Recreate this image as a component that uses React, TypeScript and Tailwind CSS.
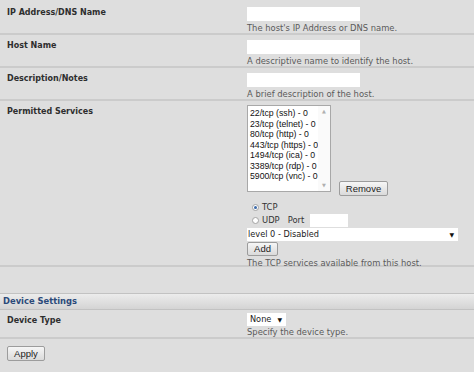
import React from "react";

const services = [
  "22/tcp (ssh) - 0",
  "23/tcp (telnet) - 0",
  "80/tcp (http) - 0",
  "443/tcp (https) - 0",
  "1494/tcp (ica) - 0",
  "3389/tcp (rdp) - 0",
  "5900/tcp (vnc) - 0",
];

const verdana = "font-['DejaVu_Sans',Verdana,sans-serif]";
const arial = "font-['Liberation_Sans',Arial,sans-serif]";

function Help({ children }: { children: React.ReactNode }) {
  return <p className="h-[10px] whitespace-nowrap text-[8.4px] leading-[10px] text-[#5a5a5a]">{children}</p>;
}

function Label({ children }: { children: React.ReactNode }) {
  return (
    <div className="w-[247px] shrink-0 pl-[7px] pt-[6px] text-[8px] font-bold leading-[10px] text-[#2e2e2e]">
      {children}
    </div>
  );
}

function TextRow({ label, help, first = false }: { label: string; help: string; first?: boolean }) {
  return (
    <div className={`flex border-b-2 border-[#cbcbcb] ${first ? "h-[35px] pt-[2px]" : "h-[33px]"}`}>
      <Label>{label}</Label>
      <div className="pt-[5px]">
        <div className="h-[14px] w-[113px] bg-white" />
        <div className="mt-[2px]">
          <Help>{help}</Help>
        </div>
      </div>
    </div>
  );
}

function Button({ children, className = "" }: { children: React.ReactNode; className?: string }) {
  return (
    <button
      className={`${arial} flex items-center justify-center rounded-[2px] border border-[#9c9c9c] bg-gradient-to-b from-[#f6f6f6] to-[#dadada] text-[9.5px] leading-none text-[#222] ${className}`}
    >
      {children}
    </button>
  );
}

function Radio({ checked }: { checked?: boolean }) {
  return (
    <span className="flex h-[7px] w-[7px] items-center justify-center rounded-full border border-[#a4a4a4] bg-white">
      {checked && <span className="h-[3px] w-[3px] rounded-full bg-[#3a68a8]" />}
    </span>
  );
}

export default function App() {
  return (
    <div className={`${verdana} h-[372px] w-[474px] overflow-hidden bg-[#dedede]`}>
      <TextRow first label="IP Address/DNS Name" help="The host's IP Address or DNS name." />
      <TextRow label="Host Name" help="A descriptive name to identify the host." />
      <TextRow label="Description/Notes" help="A brief description of the host." />

      <div className="flex h-[166px] border-b-2 border-[#cbcbcb]">
        <Label>Permitted Services</Label>
        <div className="pt-[4px]">
          <div className="flex items-start">
            <div className="flex h-[87px] w-[84px] border border-[#a8a8a8] bg-white">
              <ul className={`${arial} flex-1 pl-[2px] pt-[2px] text-[8.7px] leading-[10.5px] text-[#111]`}>
                {services.map((s) => (
                  <li key={s} className="whitespace-nowrap">
                    {s}
                  </li>
                ))}
              </ul>
              <div className="flex w-[14px] flex-col items-center justify-between bg-[#fafafa] py-[3px] text-[5px] leading-none text-[#b0b0b0]">
                <span>▲</span>
                <span>▼</span>
              </div>
            </div>
            <Button className="ml-[8px] mt-[76px] h-[15px] w-[49px]">Remove</Button>
          </div>

          <div className="mt-[5px] flex h-[12px] items-center pl-[5px] text-[8.4px] text-[#333]">
            <Radio checked />
            <span className="ml-[3px]">TCP</span>
          </div>
          <div className="flex h-[14px] items-center pl-[5px] text-[8.4px] text-[#333]">
            <Radio />
            <span className="ml-[3px]">UDP</span>
            <span className="ml-[8px]">Port</span>
            <div className="ml-[6px] h-[13px] w-[38px] bg-white" />
          </div>
          <div className="mt-[1px] flex h-[13px] w-[211px] items-center justify-between bg-white pl-[1px] pr-[4px] text-[8.2px] text-[#222]">
            <span>level 0 - Disabled</span>
            <span className="text-[6px] text-[#111]">▼</span>
          </div>
          <Button className="mt-[1px] h-[14px] w-[31px]">Add</Button>
          <div className="mt-[2px]">
            <Help>The TCP services available from this host.</Help>
          </div>
        </div>
      </div>

      <div className="h-[26px]" />

      <div className="flex h-[17px] items-center border-y border-[#c2c2c2] bg-gradient-to-b from-[#ececec] to-[#d4d4d4] pl-[3px] text-[8.4px] font-bold text-[#2b4a7a]">
        Device Settings
      </div>

      <div className="flex h-[29px] border-b-2 border-[#cbcbcb]">
        <Label>Device Type</Label>
        <div className="pt-[3px]">
          <div className="flex h-[13px] w-[39px] items-center justify-between bg-white pl-[3px] pr-[4px] text-[8.2px] text-[#222]">
            <span>None</span>
            <span className="text-[6px] text-[#111]">▼</span>
          </div>
          <div className="mt-[1px]">
            <Help>Specify the device type.</Help>
          </div>
        </div>
      </div>

      <div className="pl-[7px] pt-[7px]">
        <Button className="h-[15px] w-[38px]">Apply</Button>
      </div>
    </div>
  );
}
